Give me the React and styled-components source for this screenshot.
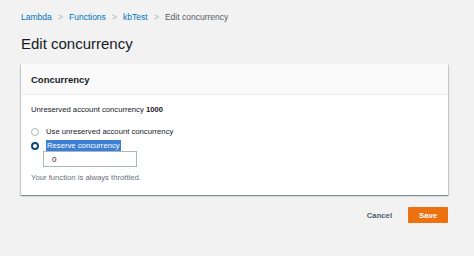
import styled, { createGlobalStyle } from 'styled-components';

const Global = createGlobalStyle`
  html, body {
    margin: 0;
    padding: 0;
    background: #f2f2f2;
    font-family: "Liberation Sans", Arial, sans-serif;
    color: #16191f;
  }
  * { box-sizing: border-box; }
`;

const Page = styled.div`
  width: 474px;
  height: 259px;
  padding: 10px 26px 0 21px;
  border-bottom: 3px solid #fff;
`;

const Crumbs = styled.nav`
  display: flex;
  align-items: center;
  gap: 5px;
  height: 14px;
  font-size: 8.5px;
`;

const Crumb = styled.a`
  color: ${(p) => (p.$current ? '#545b64' : '#0073bb')};
  text-decoration: none;
`;

const Sep = styled.span`
  color: #aab7b8;
  font-size: 9px;
  padding: 0 1px;
`;

const Title = styled.h1`
  margin: 11px 0 0;
  font-size: 15px;
  font-weight: 400;
  line-height: 18px;
  color: #16191f;
`;

const Card = styled.section`
  margin-top: 11px;
  background: #fff;
  box-shadow: 0 1px 1px 0 rgba(0, 28, 36, 0.3), 1px 1px 1px 0 rgba(0, 28, 36, 0.15), -1px 1px 1px 0 rgba(0, 28, 36, 0.15);
`;

const CardHeader = styled.header`
  height: 31px;
  padding: 0 10px;
  display: flex;
  align-items: center;
  background: #fafafa;
  border-bottom: 1px solid #eaeded;
  font-size: 9.5px;
  font-weight: 700;
`;

const CardBody = styled.div`
  padding: 9px 10px 12px;
  font-size: 7.7px;
`;

const Line = styled.div`
  line-height: 11px;
`;

const Options = styled.div`
  margin-top: 11px;
  display: flex;
  flex-direction: column;
  gap: 3px;
`;

const Option = styled.label`
  display: flex;
  align-items: center;
  gap: 7px;
  line-height: 11px;
`;

const Radio = styled.span`
  width: 8px;
  height: 8px;
  border-radius: 50%;
  border: ${(p) => (p.$on ? '2.5px solid #0a4a74' : '1px solid #aab7b8')};
  background: #fff;
  flex: none;
`;

const Selected = styled.span`
  background: #3b7fd6;
  color: #fff;
  padding: 0 1px;
`;

const Input = styled.div`
  margin: -3px 0 0 12px;
  width: 94px;
  height: 16px;
  border: 1px solid #aab7b8;
  padding: 0 8px;
  display: flex;
  align-items: center;
  font-size: 8px;
`;

const Hint = styled.div`
  margin-top: 5px;
  color: #687078;
  line-height: 11px;
`;

const Actions = styled.div`
  display: flex;
  justify-content: flex-end;
  align-items: center;
  gap: 16px;
  margin-top: 12px;
`;

const Button = styled.button`
  border: none;
  font-family: inherit;
  font-size: 7.7px;
  font-weight: 700;
  height: 16px;
  padding: 0 ${(p) => (p.$primary ? '11px' : '0')};
  background: ${(p) => (p.$primary ? '#ec7211' : 'transparent')};
  color: ${(p) => (p.$primary ? '#fff' : '#545b64')};
  border-radius: 1px;
`;

export default function App() {
  return (
    <Page>
      <Global />
      <Crumbs>
        <Crumb>Lambda</Crumb>
        <Sep>&gt;</Sep>
        <Crumb>Functions</Crumb>
        <Sep>&gt;</Sep>
        <Crumb>kbTest</Crumb>
        <Sep>&gt;</Sep>
        <Crumb $current>Edit concurrency</Crumb>
      </Crumbs>
      <Title>Edit concurrency</Title>
      <Card>
        <CardHeader>Concurrency</CardHeader>
        <CardBody>
          <Line>
            Unreserved account concurrency <b>1000</b>
          </Line>
          <Options>
            <Option>
              <Radio />
              Use unreserved account concurrency
            </Option>
            <Option>
              <Radio $on />
              <Selected>Reserve concurrency</Selected>
            </Option>
            <Input>0</Input>
          </Options>
          <Hint>Your function is always throttled.</Hint>
        </CardBody>
      </Card>
      <Actions>
        <Button>Cancel</Button>
        <Button $primary>Save</Button>
      </Actions>
    </Page>
  );
}
